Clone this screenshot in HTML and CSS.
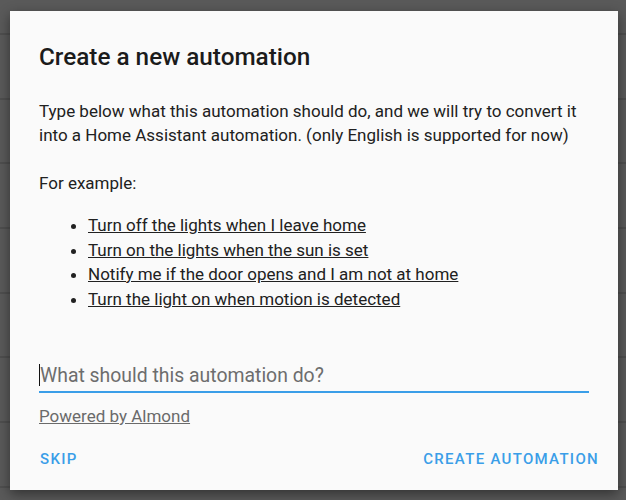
FILE: index.html
```html
<!DOCTYPE html>
<html lang="en">
<head>
    <meta charset="UTF-8">
    <title>Create a new automation</title>
    <link rel="stylesheet" href="styles.css">
</head>
<body>
    <div class="dialog">
        <h2 class="dialog-title">Create a new automation</h2>

        <div class="dialog-content">
            <p class="intro">Type below what this automation should do, and we will try to convert it into a Home Assistant automation. (only English is supported for now)</p>
            <p>For example:</p>
            <ul class="examples">
                <li><a href="#">Turn off the lights when I leave home</a></li>
                <li><a href="#">Turn on the lights when the sun is set</a></li>
                <li><a href="#">Notify me if the door opens and I am not at home</a></li>
                <li><a href="#">Turn the light on when motion is detected</a></li>
            </ul>

            <div class="input-box">
                <span class="caret"></span>
                <input type="text" placeholder="What should this automation do?">
            </div>
            <a href="#" class="powered">Powered by Almond</a>
        </div>

        <div class="dialog-buttons">
            <button>Skip</button>
            <button>Create automation</button>
        </div>
    </div>
</body>
</html>
```

FILE: styles.css
```css
body {
    margin: 0;
    padding: 11px 0 0 10px;
    height: 500px;
    box-sizing: border-box;
    overflow: hidden;
    font-family: Roboto, "Noto Sans", sans-serif;
    background-color: #5a5a5a;
    /* faint rows of the page behind the overlay */
    background-image: repeating-linear-gradient(to bottom,
        transparent 0, transparent 33px, #4f4f4f 33px, #4f4f4f 35px, transparent 35px, transparent 64.7px);
}

.dialog {
    width: 608px;
    height: 479px;
    box-sizing: border-box;
    background-color: #fafafa;
    padding: 0 28px 0 29px;
    box-shadow: 0 4px 12px rgba(0, 0, 0, 0.45);
    display: flex;
    flex-direction: column;
    color: #212121;
}

.dialog-title {
    margin: 30px 0 0;
    font-size: 24.3px;
    font-weight: 500;
    line-height: 32px;
    color: #1b1b1b;
}

.dialog-content {
    font-size: 17px;
    line-height: 24px;
    flex: 1;
}

.dialog-content p {
    margin: 24px 0 0;
}

.dialog-content p.intro {
    margin-top: 26px;
}

.examples {
    margin: 18px 0 0;
    padding-left: 49px;
    line-height: 24.5px;
}

.examples a {
    color: #212121;
}

.input-box {
    position: relative;
    margin: 49px 0 0;
    border-bottom: 2px solid #3a9ee8;
    width: 550px;
}

.input-box input {
    width: 100%;
    box-sizing: border-box;
    border: none;
    outline: none;
    background: transparent;
    font-family: inherit;
    font-size: 19.4px;
    padding: 4px 0 4px 1px;
    color: #212121;
}

.input-box input::placeholder {
    color: #6d6d6d;
}

.caret {
    position: absolute;
    left: 0;
    top: 4px;
    width: 1px;
    height: 22px;
    background: #111;
}

.powered {
    display: inline-block;
    margin-top: 11px;
    font-size: 17px;
    color: #6a6a6a;
}

.dialog-buttons {
    display: flex;
    justify-content: space-between;
    margin: 0 -9px 0 1px;
    padding-bottom: 22px;
}

.dialog-buttons button {
    border: none;
    background: none;
    padding: 0;
    font-family: inherit;
    font-size: 15px;
    font-weight: 500;
    letter-spacing: 1.3px;
    text-transform: uppercase;
    color: #3a9ee8;
    cursor: pointer;
}
```
